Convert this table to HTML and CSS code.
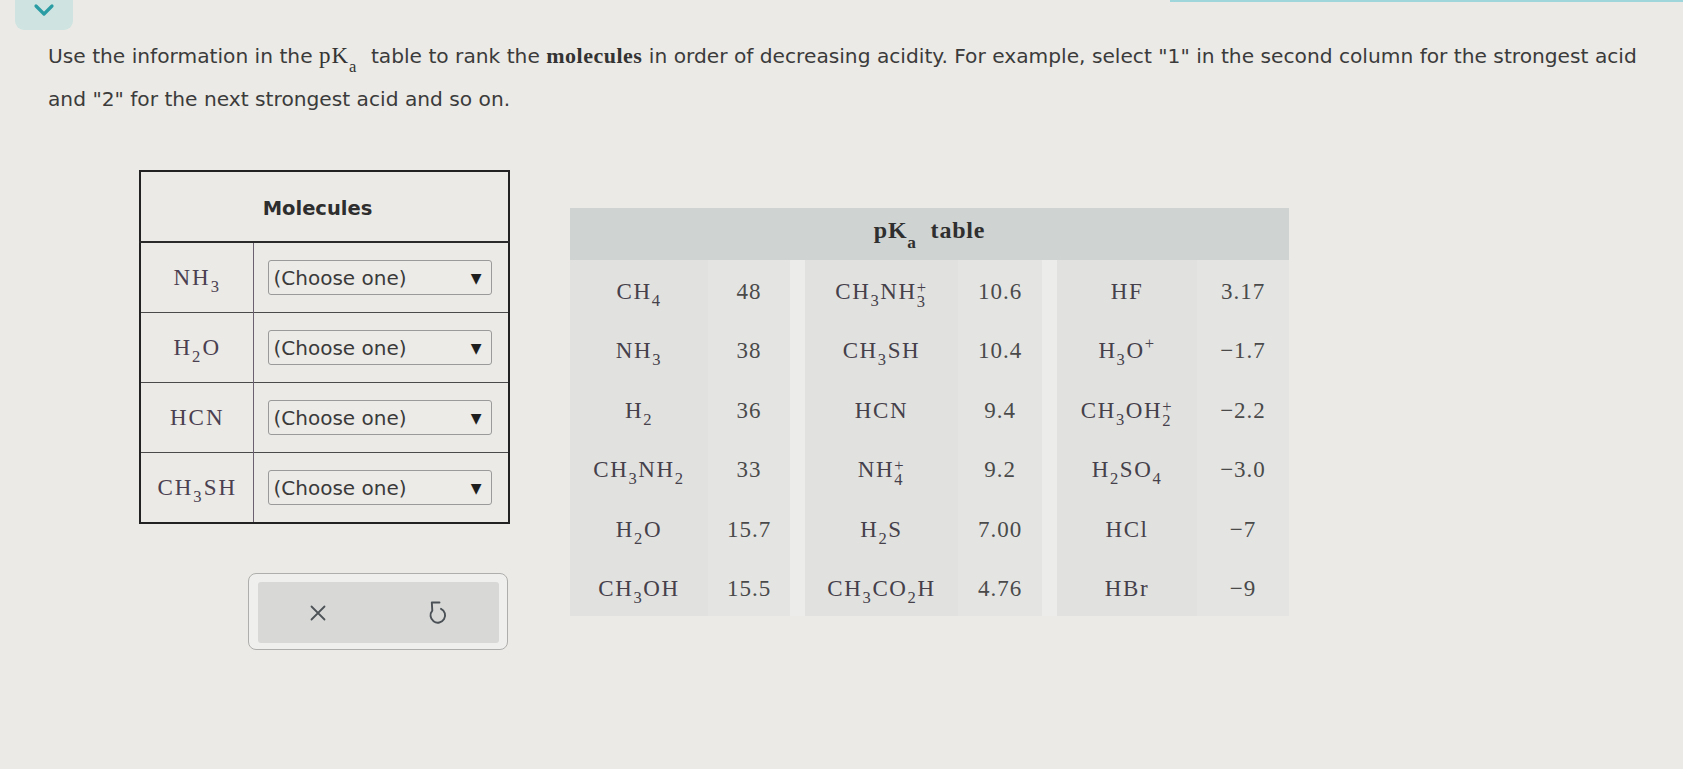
FILE: index.html
```html
<!DOCTYPE html>
<html>
<head>
<meta charset="utf-8">
<link rel="stylesheet" href="styles.css">
</head>
<body>
<div class="topline"></div>
<div class="topbar">
  <button class="toggle" aria-label="collapse">
    <svg width="24" height="16" viewBox="0 0 24 16"><path d="M4 4 L12 12 L20 4" fill="none" stroke="#2a9ca3" stroke-width="3.2" stroke-linecap="round" stroke-linejoin="round"/></svg>
  </button>
</div>
<p class="prompt">Use the information in the <span class="chem">pK<sub class="suba">a</sub></span> table to rank the <b class="chem">molecules</b> in order of decreasing acidity. For example, select "1" in the second column for the strongest acid and "2" for the next strongest acid and so on.</p>

<div class="work">
  <div class="left">
    <table class="mol">
      <colgroup><col class="c1"><col class="c2"></colgroup>
      <thead>
        <tr><th colspan="2">Molecules</th></tr>
      </thead>
      <tbody>
        <tr><td class="f">NH<sub>3</sub></td><td class="s"><div class="select"><span>(Choose one)</span><span class="tri">▼</span></div></td></tr>
        <tr><td class="f">H<sub>2</sub>O</td><td class="s"><div class="select"><span>(Choose one)</span><span class="tri">▼</span></div></td></tr>
        <tr><td class="f">HCN</td><td class="s"><div class="select"><span>(Choose one)</span><span class="tri">▼</span></div></td></tr>
        <tr><td class="f">CH<sub>3</sub>SH</td><td class="s"><div class="select"><span>(Choose one)</span><span class="tri">▼</span></div></td></tr>
      </tbody>
    </table>
    <div class="actions">
      <div class="actions-inner">
        <button class="act" aria-label="clear">
          <svg width="20" height="20" viewBox="0 0 20 20"><path d="M3.5 3.5 L16.5 16.5 M16.5 3.5 L3.5 16.5" stroke="#4d5357" stroke-width="1.8" stroke-linecap="round"/></svg>
        </button>
        <button class="act" aria-label="undo">
          <svg width="20" height="25" viewBox="10 8 20 25"><path d="M20.5 10.5 L12.8 10.5 L13.3 18.6 A7.3 7.3 0 1 0 22 16.8" fill="none" stroke="#4a5055" stroke-width="1.9" stroke-linecap="round" stroke-linejoin="round"/></svg>
        </button>
      </div>
    </div>
  </div>

  <div class="pka">
    <div class="pka-head">pK<sub class="suba">a</sub> table</div>
    <div class="pka-body">
      <div class="grp g1">
        <div class="c">CH<sub>4</sub></div><div class="v">48</div>
        <div class="c">NH<sub>3</sub></div><div class="v">38</div>
        <div class="c">H<sub>2</sub></div><div class="v">36</div>
        <div class="c">CH<sub>3</sub>NH<sub>2</sub></div><div class="v">33</div>
        <div class="c">H<sub>2</sub>O</div><div class="v">15.7</div>
        <div class="c">CH<sub>3</sub>OH</div><div class="v">15.5</div>
      </div>
      <div class="grp g2">
        <div class="c">CH<sub>3</sub>NH<span class="st"><span>+</span><span>3</span></span></div><div class="v">10.6</div>
        <div class="c">CH<sub>3</sub>SH</div><div class="v">10.4</div>
        <div class="c">HCN</div><div class="v">9.4</div>
        <div class="c">NH<span class="st"><span>+</span><span>4</span></span></div><div class="v">9.2</div>
        <div class="c">H<sub>2</sub>S</div><div class="v">7.00</div>
        <div class="c">CH<sub>3</sub>CO<sub>2</sub>H</div><div class="v">4.76</div>
      </div>
      <div class="grp g3">
        <div class="c">HF</div><div class="v">3.17</div>
        <div class="c">H<sub>3</sub>O<sup>+</sup></div><div class="v">−1.7</div>
        <div class="c">CH<sub>3</sub>OH<span class="st"><span>+</span><span>2</span></span></div><div class="v">−2.2</div>
        <div class="c">H<sub>2</sub>SO<sub>4</sub></div><div class="v">−3.0</div>
        <div class="c">HCl</div><div class="v">−7</div>
        <div class="c">HBr</div><div class="v">−9</div>
      </div>
    </div>
  </div>
</div>
</body>
</html>
```
FILE: styles.css
```css
html, body {
  margin: 0;
  padding: 0;
}
body {
  background: #ebeae6;
  color: #3a3a3a;
  font-family: "DejaVu Sans", Verdana, sans-serif;
  width: 1683px;
  height: 769px;
  overflow: hidden;
  position: relative;
}
.topline {
  position: absolute;
  top: 0;
  left: 1170px;
  right: 0;
  height: 2px;
  background: #9fd6dc;
}
.topbar {
  height: 30px;
  padding-left: 15px;
}
.toggle {
  width: 58px;
  height: 30px;
  border: none;
  border-radius: 0 0 9px 9px;
  background: #cfe4e1;
  display: flex;
  align-items: flex-start;
  justify-content: center;
  padding: 2px 0 0;
}
.prompt {
  margin: 4px 26px 0 48px;
  font-size: 20.2px;
  line-height: 43px;
  color: #3b3b3b;
}
.chem {
  font-family: "Liberation Serif", "Times New Roman", serif;
  font-size: 23px;
  letter-spacing: 1px;
  color: #333;
}
b.chem {
  font-size: 22px;
  letter-spacing: 0.5px;
}
.suba {
  font-size: 0.72em;
  vertical-align: -0.55em;
  line-height: 0;
  margin-right: 7px;
}
.work {
  display: flex;
  align-items: flex-start;
  margin-top: 49px;
  padding-left: 141px;
}
.left {
  width: 369px;
  display: flex;
  flex-direction: column;
  align-items: flex-end;
}
.mol {
  border-collapse: collapse;
  width: 369px;
  border: 2px solid #222;
  table-layout: fixed;
}
.mol col.c1 { width: 114px; }
.mol col.c2 { width: 255px; }
.mol th {
  font-weight: bold;
  font-size: 19.5px;
  color: #2e2e2e;
  text-align: center;
  border-bottom: 2px solid #2a2a2a;
  padding: 4px 14px 0 0;
  box-sizing: border-box;
  height: 71px;
}
.mol td {
  height: 69px;
  padding: 0;
  border-top: 1px solid #4a4a4a;
}
.mol td.f {
  text-align: center;
  font-family: "Liberation Serif", "Times New Roman", serif;
  font-size: 23px;
  letter-spacing: 2px;
  color: #4a4050;
  border-right: 1.5px solid #6a6070;
}
.mol td.s {
  padding-left: 14px;
}
sub {
  font-size: 0.72em;
  vertical-align: -0.4em;
  line-height: 0;
}
sup {
  font-size: 0.72em;
  vertical-align: 0.55em;
  line-height: 0;
}
.select {
  display: flex;
  align-items: center;
  justify-content: space-between;
  padding: 0 10px 0 4px;
  box-sizing: border-box;
  width: 224px;
  height: 35px;
  border: 1px solid #9a9a9a;
  border-radius: 3px;
  font-size: 20px;
  color: #3a3a3a;
  background: #ecebe8;
}
.tri {
  font-size: 14px;
  color: #1e1e1e;
}
.actions {
  margin-top: 49px;
  margin-right: 2px;
  width: 260px;
  height: 77px;
  box-sizing: border-box;
  border: 1.5px solid #aeaeac;
  border-radius: 8px;
  background: #efefed;
  padding: 8px 8px 6px 9px;
}
.actions-inner {
  height: 100%;
  background: #d8d9d7;
  border-radius: 3px;
  display: flex;
}
.act {
  flex: 1;
  border: none;
  background: transparent;
  display: flex;
  align-items: center;
  justify-content: center;
  padding: 0;
}
.pka {
  margin-left: 60px;
  margin-top: 38px;
  width: 719px;
}
.pka-head {
  height: 52px;
  background: #cfd3d1;
  text-align: center;
  font-family: "Liberation Serif", "Times New Roman", serif;
  font-weight: bold;
  font-size: 24px;
  letter-spacing: 0.8px;
  line-height: 44px;
  color: #2f2f2f;
}
.pka-body {
  display: flex;
  gap: 15px;
  background: #ecedeb;
}
.grp {
  display: grid;
  grid-auto-rows: 59.4px;
  background: #e1e2e0;
  font-family: "Liberation Serif", "Times New Roman", serif;
  font-size: 23px;
  color: #45404a;
}
.g1 { grid-template-columns: 138px 82px; }
.g2 { grid-template-columns: 153px 84px; }
.g3 { grid-template-columns: 140px 92px; }
.c, .v {
  text-align: center;
  padding-top: 4px;
  line-height: 55px;
  white-space: nowrap;
}
.c {
  letter-spacing: 1.6px;
}
.v {
  color: #4a4a4a;
  background: #e4e5e3;
  letter-spacing: 1px;
}
.st {
  display: inline-flex;
  flex-direction: column;
  font-size: 0.72em;
  line-height: 0.85;
  vertical-align: 0.35em;
  align-items: flex-start;
}
```
